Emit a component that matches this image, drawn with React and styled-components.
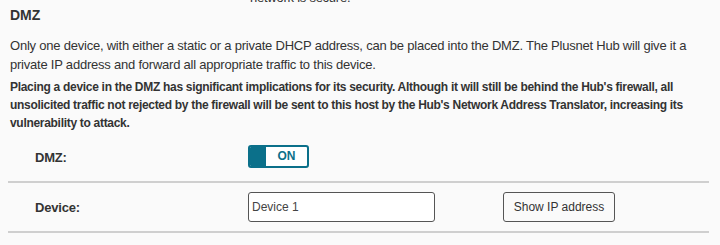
import React, { useState } from "react";
import styled, { createGlobalStyle } from "styled-components";

const GlobalStyle = createGlobalStyle`
    html, body {
        margin: 0;
        padding: 0;
        background: #fafafa;
        overflow: hidden;
    }
    body {
        font-family: "Liberation Sans", Arial, sans-serif;
        color: #333;
    }
`;

const Page = styled.div`
    width: 720px;
    height: 245px;
    overflow: hidden;
    padding: 0 11px 0 8px;
    box-sizing: border-box;
`;

const PrevRow = styled.div`
    margin-top: -12px;
    padding-left: 242px;
    font-size: 13px;
    line-height: 19px;
    letter-spacing: -0.25px;
    color: #333;
`;

const Heading = styled.h3`
    margin: -1px 0 0;
    padding: 0 2px;
    font-size: 14px;
    line-height: 18px;
    font-weight: bold;
    color: #333;
`;

const Text = styled.p`
    margin: ${(p) => p.$top || 0}px 0 0;
    padding: 0 2px;
    max-width: 680px;
    font-size: ${(p) => (p.$bold ? 12 : 13)}px;
    line-height: ${(p) => (p.$bold ? 18 : 19)}px;
    letter-spacing: ${(p) => (p.$bold ? -0.3 : -0.22)}px;
    font-weight: ${(p) => (p.$bold ? "bold" : "normal")};
    color: #333;
`;

const Form = styled.div`
    margin-top: 1px;
`;

const Row = styled.div`
    display: grid;
    grid-template-columns: 213px 255px auto;
    align-items: center;
    height: 48px;
    padding-left: 27px;
    border-bottom: 2px solid #cfcfcf;
`;

const Label = styled.label`
    font-size: 13px;
    font-weight: bold;
    letter-spacing: -0.2px;
    color: #333;
`;

const Toggle = styled.button`
    display: flex;
    width: 61px;
    height: 23px;
    padding: 0;
    margin-top: -2px;
    border: 2px solid #0b708a;
    border-radius: 3px;
    background: #fff;
    cursor: pointer;
    overflow: hidden;
    font-family: inherit;
`;

const Knob = styled.span`
    width: 16px;
    height: 100%;
    background: #0b708a;
`;

const ToggleText = styled.span`
    flex: 1;
    display: flex;
    align-items: center;
    justify-content: center;
    font-size: 12px;
    font-weight: bold;
    color: #0b708a;
`;

const Input = styled.input`
    width: 187px;
    height: 30px;
    box-sizing: border-box;
    padding: 0 3px;
    border: 1px solid #555;
    border-radius: 3px;
    background: #fff;
    font-family: inherit;
    font-size: 12px;
    color: #444;
    outline: none;
`;

const Button = styled.button`
    width: 112px;
    height: 30px;
    border: 1px solid #555;
    border-radius: 3px;
    background: #fafafa;
    font-family: inherit;
    font-size: 12px;
    color: #333;
    cursor: pointer;
`;

export default function App() {
    const [on, setOn] = useState(true);
    const [device, setDevice] = useState("Device 1");

    return (
        <Page>
            <GlobalStyle />
            <PrevRow>network is secure.</PrevRow>
            <Heading>DMZ</Heading>
            <Text $top={12}>
                Only one device, with either a static or a private DHCP address, can be placed into the DMZ. The Plusnet Hub will give it a private IP address and forward all appropriate traffic to this device.
            </Text>
            <Text $bold $top={4}>
                Placing a device in the DMZ has significant implications for its security. Although it will still be behind the Hub's firewall, all unsolicited traffic not rejected by the firewall will be sent to this host by the Hub's Network Address Translator, increasing its vulnerability to attack.
            </Text>
            <Form>
                <Row>
                    <Label>DMZ:</Label>
                    <Toggle onClick={() => setOn(!on)}>
                        <Knob />
                        <ToggleText>{on ? "ON" : "OFF"}</ToggleText>
                    </Toggle>
                </Row>
                <Row>
                    <Label>Device:</Label>
                    <Input value={device} onChange={(e) => setDevice(e.target.value)} />
                    <Button>Show IP address</Button>
                </Row>
            </Form>
        </Page>
    );
}
